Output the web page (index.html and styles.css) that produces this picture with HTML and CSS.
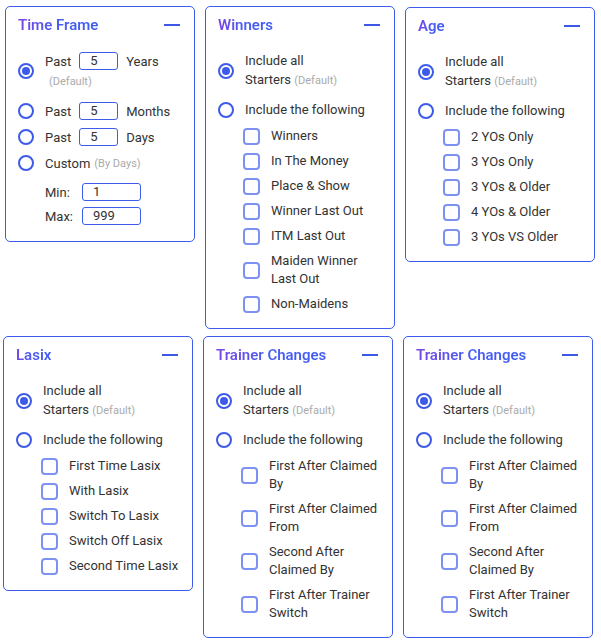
FILE: index.html
```html
<!DOCTYPE html>
<html lang="en">
<head>
    <meta charset="UTF-8">
    <meta name="viewport" content="width=device-width, initial-scale=1.0">
    <title>Race Filters</title>
    <link rel="stylesheet" href="styles.css">
</head>
<body>
    <div class="filters">
        <div class="filter-row row-top">

            <div class="panel">
                <div class="panel-head">
                    <h3>Time Frame</h3>
                    <span class="collapse"></span>
                </div>
                <div class="time-options">
                    <div class="option option-first">
                        <span class="radio checked"></span>
                        <div class="option-text">
                            <div class="line-input">Past <span class="num-box">5</span> Years</div>
                            <div class="line-default"><span class="default">(Default)</span></div>
                        </div>
                    </div>
                    <div class="option">
                        <span class="radio"></span>
                        <div class="line-input">Past <span class="num-box">5</span> Months</div>
                    </div>
                    <div class="option">
                        <span class="radio"></span>
                        <div class="line-input">Past <span class="num-box">5</span> Days</div>
                    </div>
                    <div class="option">
                        <span class="radio"></span>
                        <div class="line-input">Custom <span class="default by-days">(By Days)</span></div>
                    </div>
                    <div class="range">
                        <div class="range-row"><span class="range-label">Min:</span><span class="num-box wide">1</span></div>
                        <div class="range-row"><span class="range-label">Max:</span><span class="num-box wide">999</span></div>
                    </div>
                </div>
            </div>

            <div class="panel">
                <div class="panel-head">
                    <h3>Winners</h3>
                    <span class="collapse"></span>
                </div>
                <div class="option all">
                    <span class="radio checked"></span>
                    <div class="option-text">Include all<br>Starters <span class="default">(Default)</span></div>
                </div>
                <div class="option following">
                    <span class="radio"></span>
                    <div class="option-text">Include the following</div>
                </div>
                <ul class="checks">
                    <li><span class="box"></span><span>Winners</span></li>
                    <li><span class="box"></span><span>In The Money</span></li>
                    <li><span class="box"></span><span>Place &amp; Show</span></li>
                    <li><span class="box"></span><span>Winner Last Out</span></li>
                    <li><span class="box"></span><span>ITM Last Out</span></li>
                    <li><span class="box"></span><span>Maiden Winner<br>Last Out</span></li>
                    <li><span class="box"></span><span>Non-Maidens</span></li>
                </ul>
            </div>

            <div class="panel panel-age">
                <div class="panel-head">
                    <h3>Age</h3>
                    <span class="collapse"></span>
                </div>
                <div class="option all">
                    <span class="radio checked"></span>
                    <div class="option-text">Include all<br>Starters <span class="default">(Default)</span></div>
                </div>
                <div class="option following">
                    <span class="radio"></span>
                    <div class="option-text">Include the following</div>
                </div>
                <ul class="checks">
                    <li><span class="box"></span><span>2 YOs Only</span></li>
                    <li><span class="box"></span><span>3 YOs Only</span></li>
                    <li><span class="box"></span><span>3 YOs &amp; Older</span></li>
                    <li><span class="box"></span><span>4 YOs &amp; Older</span></li>
                    <li><span class="box"></span><span>3 YOs VS Older</span></li>
                </ul>
            </div>
        </div>

        <div class="filter-row row-bottom">
            <div class="panel">
                <div class="panel-head">
                    <h3>Lasix</h3>
                    <span class="collapse"></span>
                </div>
                <div class="option all">
                    <span class="radio checked"></span>
                    <div class="option-text">Include all<br>Starters <span class="default">(Default)</span></div>
                </div>
                <div class="option following">
                    <span class="radio"></span>
                    <div class="option-text">Include the following</div>
                </div>
                <ul class="checks">
                    <li><span class="box"></span><span>First Time Lasix</span></li>
                    <li><span class="box"></span><span>With Lasix</span></li>
                    <li><span class="box"></span><span>Switch To Lasix</span></li>
                    <li><span class="box"></span><span>Switch Off Lasix</span></li>
                    <li><span class="box"></span><span>Second Time Lasix</span></li>
                </ul>
            </div>

            <div class="panel">
                <div class="panel-head">
                    <h3>Trainer Changes</h3>
                    <span class="collapse"></span>
                </div>
                <div class="option all">
                    <span class="radio checked"></span>
                    <div class="option-text">Include all<br>Starters <span class="default">(Default)</span></div>
                </div>
                <div class="option following">
                    <span class="radio"></span>
                    <div class="option-text">Include the following</div>
                </div>
                <ul class="checks">
                    <li><span class="box"></span><span>First After Claimed<br>By</span></li>
                    <li><span class="box"></span><span>First After Claimed<br>From</span></li>
                    <li><span class="box"></span><span>Second After<br>Claimed By</span></li>
                    <li><span class="box"></span><span>First After Trainer<br>Switch</span></li>
                </ul>
            </div>

            <div class="panel">
                <div class="panel-head">
                    <h3>Trainer Changes</h3>
                    <span class="collapse"></span>
                </div>
                <div class="option all">
                    <span class="radio checked"></span>
                    <div class="option-text">Include all<br>Starters <span class="default">(Default)</span></div>
                </div>
                <div class="option following">
                    <span class="radio"></span>
                    <div class="option-text">Include the following</div>
                </div>
                <ul class="checks">
                    <li><span class="box"></span><span>First After Claimed<br>By</span></li>
                    <li><span class="box"></span><span>First After Claimed<br>From</span></li>
                    <li><span class="box"></span><span>Second After<br>Claimed By</span></li>
                    <li><span class="box"></span><span>First After Trainer<br>Switch</span></li>
                </ul>
            </div>
        </div>
    </div>
</body>
</html>
```

FILE: styles.css
```css
body {
    margin: 0;
    font-family: 'Roboto', 'Noto Sans', sans-serif;
    font-size: 13px;
    color: #333;
    background: #fff;
}

.filter-row {
    display: flex;
    align-items: flex-start;
    gap: 10px;
}

.row-top {
    padding: 6px 0 0 5px;
}

.row-bottom {
    padding: 7px 0 0 3px;
}

.panel {
    width: 190px;
    box-sizing: border-box;
    border: 1px solid #3d5cec;
    border-radius: 5px;
    padding: 8px 14px 15px 12px;
}

.panel-age {
    margin-top: 1px;
}

.panel-head {
    display: flex;
    justify-content: space-between;
    align-items: center;
    height: 20px;
}

.panel-head h3 {
    margin: 0;
    font-size: 15px;
    font-weight: 600;
    line-height: 20px;
    background: linear-gradient(to right, #7a45e2, #4a5cf2 45%, #3f5df0);
    -webkit-background-clip: text;
    background-clip: text;
    color: transparent;
}

.collapse {
    width: 16px;
    height: 2px;
    background: #3a59e8;
}

.option {
    display: flex;
    align-items: center;
}

.radio {
    flex: none;
    width: 16px;
    height: 16px;
    box-sizing: border-box;
    border: 2px solid #3d5ae8;
    border-radius: 50%;
    margin: 0 11px 0 0;
    position: relative;
}

.radio.checked::after {
    content: '';
    position: absolute;
    top: 2px;
    left: 2px;
    width: 8px;
    height: 8px;
    border-radius: 50%;
    background: #3d5ae8;
}

.option-text {
    line-height: 19px;
}

.all {
    margin-top: 16px;
}

.following {
    margin-top: 10px;
}

.default {
    font-size: 11px;
    color: #aaa;
}

.checks {
    list-style: none;
    margin: 8px -10px 0 25px;
    padding: 0;
    display: flex;
    flex-direction: column;
    gap: 7px;
}

.checks li {
    display: flex;
    align-items: center;
    line-height: 18px;
    white-space: nowrap;
}

.box {
    flex: none;
    width: 17px;
    height: 17px;
    box-sizing: border-box;
    border: 2px solid #7d91f0;
    border-radius: 4px;
    margin-right: 11px;
}

/* time frame */
.time-options {
    margin-top: 16px;
    display: flex;
    flex-direction: column;
    gap: 6px;
}

.option-first {
    margin-bottom: 4px;
}

.line-input {
    display: flex;
    align-items: center;
    height: 20px;
    white-space: nowrap;
}

.by-days {
    margin-left: 4px;
}

.line-default {
    height: 20px;
    line-height: 20px;
    padding-left: 4px;
}

.num-box {
    display: inline-block;
    width: 39px;
    height: 18px;
    box-sizing: border-box;
    border: 1px solid #3d5cec;
    border-radius: 3px;
    padding-left: 10px;
    line-height: 16px;
    margin: 0 8px;
}

.num-box.wide {
    width: 59px;
    margin: 0;
}

.range {
    margin: 3px 0 0 27px;
    display: flex;
    flex-direction: column;
    gap: 4px;
}

.range-row {
    display: flex;
    align-items: center;
    height: 20px;
}

.range-label {
    width: 37px;
}
```
